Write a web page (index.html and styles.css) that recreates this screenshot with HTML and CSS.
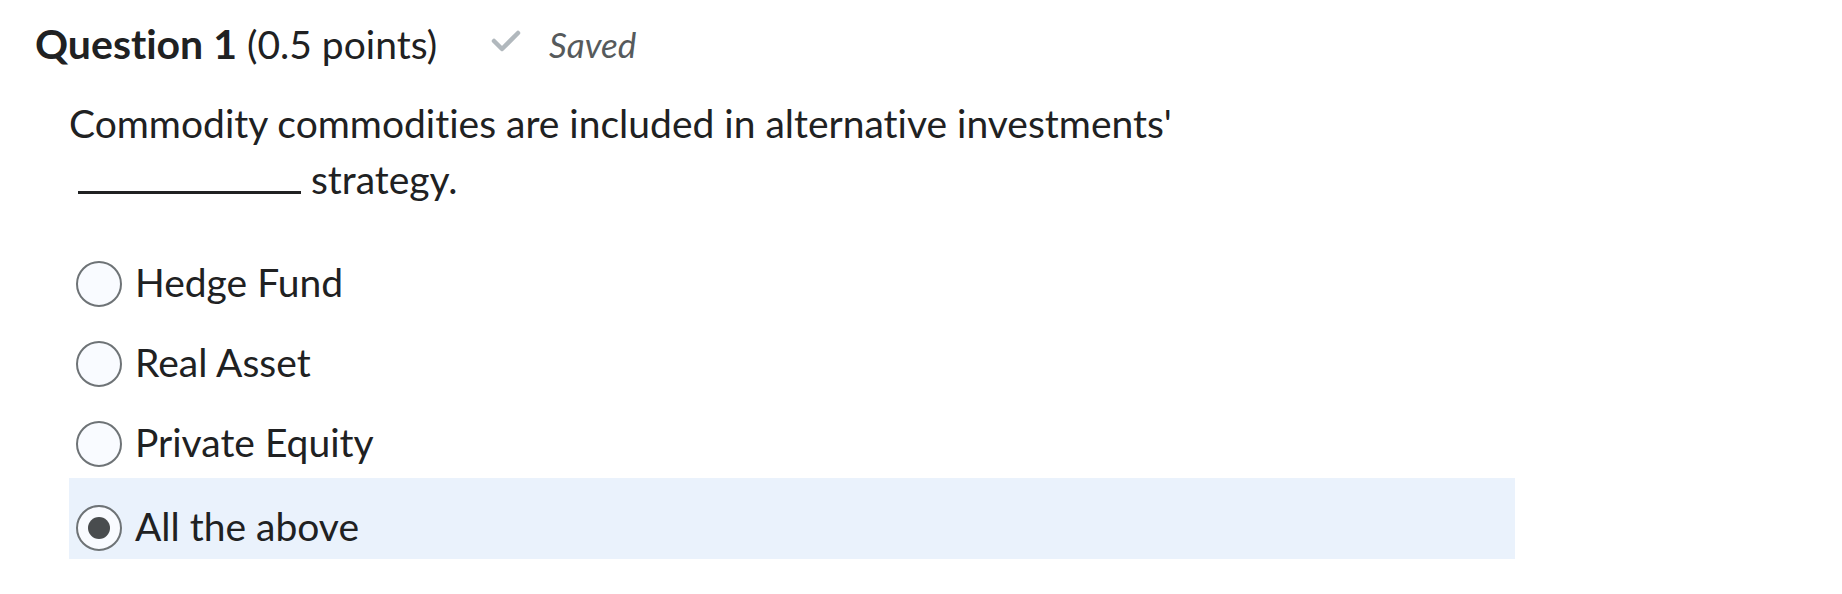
FILE: index.html
```html
<!DOCTYPE html>
<html lang="en">
<head>
    <meta charset="UTF-8">
    <meta name="viewport" content="width=device-width, initial-scale=1.0">
    <title>Question 1</title>
    <link rel="stylesheet" href="styles.css">
</head>
<body>

    <div class="question">
        <div class="question-header">
            <h2 class="question-title"><strong>Question 1</strong> (0.5 points)</h2>
            <span class="saved">
                <svg class="check" viewBox="0 0 30 24" width="30" height="24" aria-hidden="true">
                    <polyline points="3,11 11,19 27,3" />
                </svg>
                <em>Saved</em>
            </span>
        </div>

        <p class="stem">Commodity commodities are included in alternative investments' <span class="blank"></span> strategy.</p>

        <div class="choices">
            <label class="choice">
                <span class="radio"></span>
                <span class="choice-text">Hedge Fund</span>
            </label>
            <label class="choice">
                <span class="radio"></span>
                <span class="choice-text">Real Asset</span>
            </label>
            <label class="choice">
                <span class="radio"></span>
                <span class="choice-text">Private Equity</span>
            </label>
            <label class="choice selected">
                <span class="radio checked"></span>
                <span class="choice-text">All the above</span>
            </label>
        </div>
    </div>

</body>
</html>
```

FILE: styles.css
```css
body {
    font-family: Lato, "Open Sans", sans-serif;
    font-variant-ligatures: none;
    color: #202122;
    background: #ffffff;
    margin: 0;
}
.question {
    padding: 20px 0 0 35px;
}
.question-header {
    display: flex;
    align-items: center;
    height: 48px;
}
.question-title {
    font-size: 39px;
    font-weight: normal;
    line-height: 48px;
    margin: 0;
}
.question-title strong {
    font-size: 41px;
    font-weight: bold;
}
.saved {
    display: flex;
    align-items: center;
    margin-left: 54px;
    color: #565a5c;
}
.saved em {
    font-size: 35px;
    margin-left: 28px;
}
.check {
    margin-top: -4px;
}
.check polyline {
    fill: none;
    stroke: #b1b8bd;
    stroke-width: 4.5;
    stroke-linecap: round;
    stroke-linejoin: round;
}
.stem {
    font-size: 39px;
    line-height: 56px;
    width: 1250px;
    margin: 27px 0 0 34px;
}
.blank {
    display: inline-block;
    width: 223px;
    border-bottom: 3px solid #202122;
    margin-left: 9px;
}
.choices {
    margin: 28px 0 0 34px;
    width: 1446px;
}
.choice {
    display: flex;
    align-items: center;
    gap: 13px;
    padding: 26px 7px 8px;
    font-size: 39px;
    line-height: 44px;
}
.choice.selected {
    padding-top: 27px;
    padding-bottom: 8px;
    margin-top: 3px;
    background: #eaf2fc;
}
.radio {
    box-sizing: border-box;
    width: 46px;
    height: 46px;
    border: 2px solid #6e7376;
    border-radius: 50%;
    background: #f9fbff;
    display: flex;
    align-items: center;
    justify-content: center;
}
.radio.checked::after {
    content: "";
    width: 22px;
    height: 22px;
    border-radius: 50%;
    background: #494c4e;
}
.choice-text {
    margin-top: -5px;
}
```
